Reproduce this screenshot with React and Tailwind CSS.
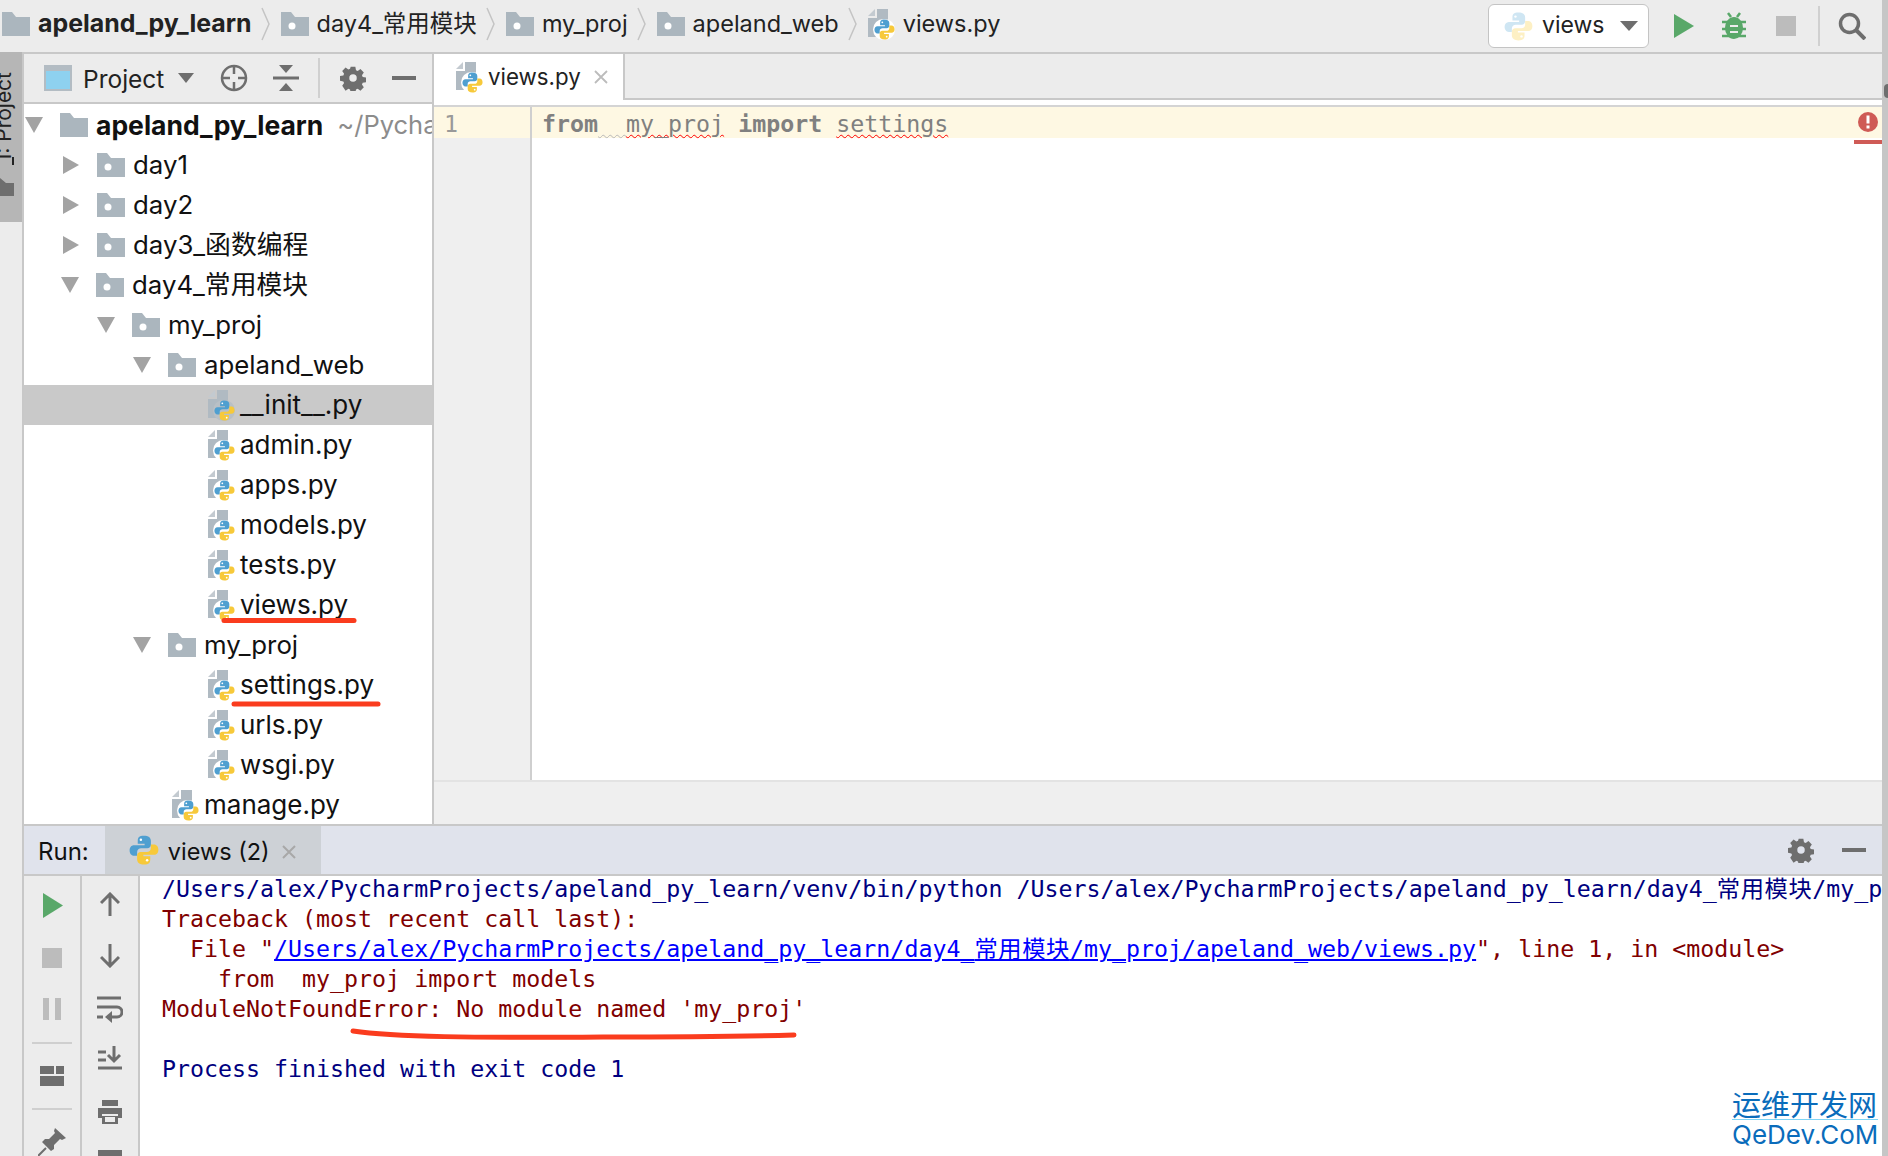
import React from 'react';

const uiFont = { fontFamily: '"Inter", "Noto Sans CJK SC", sans-serif' };

const snake = 'M12 .5C8 .5 7 2 7 4.500V7h5.500v1.200H4C1.800 8.200.5 10 .5 12.300S1.800 16.500 4 16.500h2.500v-3c0-1.800 1.500-3 3.200-3h5c1.500 0 2.800-1.200 2.800-2.800V4.500C17.500 2 15.500.5 12 .5z';

const Python = ({ className, faded }) => (
  <svg viewBox="0 0 24 24" className={className}>
    <path fill={faded ? '#cfe6f3' : '#4f9fd0'} d={snake} />
    <circle cx="9.500" cy="3.800" r="1" fill="#fff" />
    <g transform="rotate(180 12 12)">
      <path fill={faded ? '#fdf0c4' : '#f7c93a'} d={snake} />
      <circle cx="9.500" cy="3.800" r="1" fill="#fff" />
    </g>
  </svg>
);

const PyFile = ({ selected }) => (
  <span className="relative block w-[27px] h-[30px] shrink-0">
    <svg viewBox="0 0 20 28" className="absolute left-0 top-0 w-[20px] h-[28px]">
      <path fill="#b0bac2" d="M9 0h11v28H0V9h9z" />
      <path fill="#c3cad0" d="M7 0v7H0z" />
    </svg>
    <span className={`absolute left-[5px] top-[10px] w-[22px] h-[21px] rounded-full ${selected ? 'bg-[#b9c0c6]' : 'bg-white'}`} />
    <Python className="absolute left-[6px] top-[10px] w-[21px] h-[21px]" />
  </span>
);

const Folder = ({ dot = true }) => (
  <svg viewBox="0 0 28 24" className="w-[28px] h-[24px] shrink-0">
    <path fill="#abb6be" d="M0 0h10l4 5h14v19H0z" />
    {dot && <circle cx="11" cy="14" r="3.500" fill="#fff" />}
  </svg>
);

const Right = () => (
  <svg viewBox="0 0 16 18" className="w-[16px] h-[18px]"><path fill="#a3a3a3" d="M0 0l16 9-16 9z" /></svg>
);
const Down = () => (
  <svg viewBox="0 0 18 16" className="w-[18px] h-[16px]"><path fill="#a3a3a3" d="M0 0h18l-9 16z" /></svg>
);

const Chevron = () => (
  <svg viewBox="0 0 10 34" className="w-[10px] h-[34px] mx-[9.500px] shrink-0">
    <path fill="none" stroke="#c4c4c4" strokeWidth="1.500" d="M1 1l7 16-7 16" />
  </svg>
);

const Gear = ({ className }) => (
  <svg viewBox="0 0 24 24" className={className}>
    <path
      fill="#6e6e6e"
      fillRule="evenodd"
      d="M9.500 0h5l.7 3.600 1.800.8 3-2 3.600 3.600-2 3 .8 1.800 3.600.7v5l-3.600.7-.8 1.800 2 3-3.600 3.600-3-2-1.800.8-.7 3.600h-5l-.7-3.600-1.800-.8-3 2L.4 20.400l2-3-.8-1.800L-2 14.900v-5l3.600-.7.8-1.800-2-3L4 .8l3 2 1.800-.8zM12 8a4 4 0 100 8 4 4 0 000-8z"
      transform="translate(1.700 1.700) scale(.86)"
    />
  </svg>
);

const Minus = ({ className }) => <span className={`block h-[4px] bg-[#6e6e6e] ${className}`} />;

const treeRows = [
  { kind: 'root', name: 'apeland_py_learn', pad: 'pl-[1px]', open: true },
  { kind: 'folder', name: 'day1', pad: 'pl-[38px]' },
  { kind: 'folder', name: 'day2', pad: 'pl-[38px]' },
  { kind: 'folder', name: 'day3_函数编程', pad: 'pl-[38px]' },
  { kind: 'folder', name: 'day4_常用模块', pad: 'pl-[37px]', open: true },
  { kind: 'folder', name: 'my_proj', pad: 'pl-[73px]', open: true },
  { kind: 'folder', name: 'apeland_web', pad: 'pl-[109px]', open: true },
  { kind: 'file', name: '__init__.py', pad: 'pl-[184px]', selected: true },
  { kind: 'file', name: 'admin.py', pad: 'pl-[184px]' },
  { kind: 'file', name: 'apps.py', pad: 'pl-[184px]' },
  { kind: 'file', name: 'models.py', pad: 'pl-[184px]' },
  { kind: 'file', name: 'tests.py', pad: 'pl-[184px]' },
  { kind: 'file', name: 'views.py', pad: 'pl-[184px]' },
  { kind: 'folder', name: 'my_proj', pad: 'pl-[109px]', open: true },
  { kind: 'file', name: 'settings.py', pad: 'pl-[184px]' },
  { kind: 'file', name: 'urls.py', pad: 'pl-[184px]' },
  { kind: 'file', name: 'wsgi.py', pad: 'pl-[184px]' },
  { kind: 'file', name: 'manage.py', pad: 'pl-[148px]' },
];

const TreeRow = ({ row }) => {
  if (row.kind === 'file') {
    return (
      <div className={`h-[40px] flex items-center gap-[5px] ${row.pad} ${row.selected ? 'bg-[#c9c9c9]' : ''}`}>
        <PyFile selected={row.selected} />
        <span className="text-[26px] leading-none text-[#111]">{row.name}</span>
      </div>
    );
  }
  return (
    <div className={`h-[40px] flex items-center overflow-hidden ${row.pad}`}>
      <span className="w-[18px] flex justify-center">{row.open ? <Down /> : <Right />}</span>
      <span className="ml-[17px]"><Folder dot={row.kind !== 'root'} /></span>
      <span className={`ml-[8px] leading-none text-[#111] whitespace-nowrap ${row.kind === 'root' ? 'font-bold text-[26.500px]' : 'text-[25.800px]'}`}>{row.name}</span>
      {row.kind === 'root' && <span className="ml-[14px] text-[25.500px] leading-none text-[#8c8c8c] whitespace-nowrap">~/Pycha</span>}
    </div>
  );
};

const Crumb = ({ name, bold, icon }) => (
  <div className="flex items-center shrink-0">
    {icon || <Folder dot={!bold} />}
    <span className={`ml-[8px] whitespace-nowrap text-[#222] ${bold ? 'font-bold text-[24.900px]' : 'text-[23.500px]'}`}>{name}</span>
  </div>
);

const TopBar = () => (
  <div className="h-[54px] shrink-0 bg-[#ececec] border-b-2 border-[#c8c8c8] flex items-center pl-[2px] pr-[16px]">
    <div className="flex items-center pb-[4px]">
      <Crumb name="apeland_py_learn" bold />
      <Chevron />
      <Crumb name="day4_常用模块" />
      <Chevron />
      <Crumb name="my_proj" />
      <Chevron />
      <Crumb name="apeland_web" />
      <Chevron />
      <Crumb name="views.py" icon={<PyFile />} />
    </div>
    <div className="ml-auto flex items-center">
      <div className="w-[161px] h-[44px] bg-white border border-[#c4c4c4] rounded-[6px] flex items-center pl-[15px]">
        <Python className="w-[29px] h-[29px]" faded />
        <span className="ml-[9px] mb-[1px] text-[23px] text-[#222]">views</span>
        <svg viewBox="0 0 18 10" className="ml-[16px] w-[18px] h-[10px]"><path fill="#6e6e6e" d="M0 0h18l-9 10z" /></svg>
      </div>
      <svg viewBox="0 0 20 24" className="ml-[25px] w-[20px] h-[24px]"><path fill="#59a869" d="M0 0l20 12L0 24z" /></svg>
      <svg viewBox="0 0 24 28" className="ml-[28px] w-[24px] h-[28px]">
        <path stroke="#59a869" strokeWidth="2.500" fill="none" d="M6 1l3 4M18 1l-3 4M0 10h24M0 17h24M0 24h24" />
        <ellipse cx="12" cy="16" rx="9" ry="11" fill="#59a869" />
        <path fill="#ececec" d="M8 13h8v2H8zM8 19h8v2H8z" />
      </svg>
      <span className="ml-[30px] block w-[20px] h-[20px] bg-[#bcbcbc]" />
      <span className="ml-[22px] block w-[2px] h-[40px] bg-[#d0d0d0]" />
      <svg viewBox="0 0 28 28" className="ml-[18px] w-[28px] h-[28px]">
        <circle cx="11.500" cy="11.500" r="9" fill="none" stroke="#6e6e6e" strokeWidth="3.500" />
        <path stroke="#6e6e6e" strokeWidth="4" d="M18 18l9 9" />
      </svg>
    </div>
  </div>
);

const ProjectPanel = () => (
  <div className="w-[410px] shrink-0 flex flex-col border-r-2 border-[#c8c8c8] bg-white overflow-hidden">
    <div className="h-[50px] shrink-0 bg-[#ececec] border-b-2 border-[#c8c8c8] flex items-center pl-[20px]">
      <span className="block w-[28px] h-[26px] border-2 border-t-[6px] border-[#b3bcc3] bg-[#8ed1ef]" />
      <span className="ml-[11px] mt-[3px] text-[24.500px] text-[#222]">Project</span>
      <svg viewBox="0 0 16 10" className="ml-[14px] w-[16px] h-[10px]"><path fill="#6e6e6e" d="M0 0h16l-8 10z" /></svg>
      <svg viewBox="0 0 28 28" className="ml-[26px] w-[28px] h-[28px]">
        <circle cx="14" cy="14" r="12" fill="none" stroke="#6e6e6e" strokeWidth="2.500" />
        <path stroke="#6e6e6e" strokeWidth="2.500" d="M14 2v8M14 18v8M2 14h8M18 14h8" />
      </svg>
      <svg viewBox="0 0 26 26" className="ml-[25px] w-[26px] h-[26px]">
        <path fill="#6e6e6e" d="M6 0h14l-7 8zM0 11.500h26v3H0zM13 18l7 8H6z" />
      </svg>
      <span className="ml-[19px] block w-[2px] h-[40px] bg-[#d0d0d0]" />
      <Gear className="ml-[20px] w-[26px] h-[26px]" />
      <Minus className="ml-[26px] w-[24px]" />
    </div>
    <div className="flex-1 pt-[1px]" style={uiFont}>
      {treeRows.map((row, i) => <TreeRow key={i} row={row} />)}
    </div>
  </div>
);

const Editor = () => (
  <div className="flex-1 min-w-0 flex flex-col bg-white">
    <div className="h-[46px] shrink-0 flex bg-[#ececec] border-b-2 border-[#c8c8c8]">
      <div className="w-[191px] h-[46px] bg-white border-r-2 border-[#c8c8c8] flex items-center pl-[22px]">
        <PyFile />
        <span className="ml-[5px] text-[22.300px] text-[#222]">views.py</span>
        <svg viewBox="0 0 14 14" className="ml-[13px] w-[14px] h-[14px]"><path stroke="#bcbcbc" strokeWidth="1.800" d="M1 1l12 12M13 1L1 13" /></svg>
      </div>
    </div>
    <div className="h-[7px] shrink-0 bg-white border-b-2 border-[#d4d4d4]" />
    <div className="flex-1 flex min-h-0">
      <div className="w-[98px] shrink-0 bg-[#efefef] border-r-2 border-[#cfcfcf]">
        <div className="h-[31px] bg-[#fef8e3] pl-[10px] pt-[3px] flex items-center text-[#999] text-[23.270px] font-['DejaVu_Sans_Mono',monospace]">1</div>
      </div>
      <div className="flex-1 relative">
        <div className="h-[31px] bg-[#fef8e3] pl-[10px] pt-[3px] flex items-center whitespace-pre text-[23.270px] text-[#808080] font-['DejaVu_Sans_Mono',monospace]">
          <span className="font-bold">from</span>
          <span className="underline decoration-wavy decoration-[#b8b8b8] decoration-1 underline-offset-2">{'  '}</span>
          <span className="underline decoration-wavy decoration-[#ff0000] decoration-1 underline-offset-2">my_proj</span>
          <span> </span>
          <span className="font-bold">import</span>
          <span> </span>
          <span className="underline decoration-wavy decoration-[#ff0000] decoration-1 underline-offset-2">settings</span>
        </div>
        <svg viewBox="0 0 20 20" className="absolute right-[4px] top-[5px] w-[20px] h-[20px]">
          <circle cx="10" cy="10" r="10" fill="#cf5b56" />
          <path fill="#fff" d="M8.500 3.500h3v8h-3zM8.500 13.500h3v3h-3z" />
        </svg>
        <span className="absolute right-0 top-[33px] w-[28px] h-[4px] bg-[#cf5b56]" />
      </div>
    </div>
    <div className="h-[44px] shrink-0 bg-[#efefef] border-t-2 border-[#e3e3e3]" />
  </div>
);

const Console = () => (
  <div className="flex-1 min-w-0 bg-white overflow-hidden pl-[22px] text-[23.270px] leading-[30px] whitespace-pre font-['DejaVu_Sans_Mono','Noto_Sans_CJK_SC',monospace]">
    <div className="-mt-[2px] text-[#000080]">/Users/alex/PycharmProjects/apeland_py_learn/venv/bin/python /Users/alex/PycharmProjects/apeland_py_learn/day4_<span className="tracking-[0.6px]">常用模块</span>/my_p</div>
    <div className="text-[#800000]">Traceback (most recent call last):</div>
    <div className="text-[#800000]">
      {'  File "'}
      <span className="text-[#0000ff] underline">/Users/alex/PycharmProjects/apeland_py_learn/day4_<span className="tracking-[0.6px]">常用模块</span>/my_proj/apeland_web/views.py</span>
      {'", line 1, in <module>'}
    </div>
    <div className="text-[#800000]">{'    from  my_proj import models'}</div>
    <div className="text-[#800000]">ModuleNotFoundError: No module named 'my_proj'</div>
    <div className="h-[30px]" />
    <div className="text-[#000080]">Process finished with exit code 1</div>
  </div>
);

const RunPanel = () => (
  <div className="flex-1 min-h-0 flex flex-col">
    <div className="h-[52px] shrink-0 bg-[#e0e3ec] border-y-2 border-[#c8c8c8] flex items-center">
      <span className="ml-[14px] mt-[3px] text-[24px] text-[#111]">Run:</span>
      <div className="ml-[16px] w-[216px] h-full bg-[#cdd1d6] flex items-center pl-[24px]">
        <Python className="w-[30px] h-[30px]" />
        <span className="ml-[9px] mt-[3px] text-[23.500px] text-[#111]">views (2)</span>
        <svg viewBox="0 0 14 14" className="ml-[12px] mt-[3px] w-[14px] h-[14px]"><path stroke="#a8a8a8" strokeWidth="2" d="M1 1l12 12M13 1L1 13" /></svg>
      </div>
      <Gear className="ml-auto w-[26px] h-[26px]" />
      <Minus className="ml-[28px] mr-[16px] w-[24px]" />
    </div>
    <div className="flex-1 min-h-0 flex">
      <div className="w-[58px] shrink-0 bg-[#ececec] border-r-2 border-[#c8c8c8] flex flex-col items-center pt-[17px] overflow-hidden">
        <svg viewBox="0 0 20 25" className="w-[20px] h-[25px] ml-[2px] shrink-0"><path fill="#59a869" d="M0 0l20 12.500L0 25z" /></svg>
        <span className="block mt-[30px] w-[20px] h-[20px] bg-[#bcbcbc] shrink-0" />
        <div className="mt-[30px] flex gap-[6px] shrink-0"><span className="block w-[6px] h-[22px] bg-[#bcbcbc]" /><span className="block w-[6px] h-[22px] bg-[#bcbcbc]" /></div>
        <span className="block mt-[22px] w-[40px] h-[2px] bg-[#cfcfcf] shrink-0" />
        <svg viewBox="0 0 24 20" className="mt-[22px] w-[24px] h-[20px] shrink-0"><path fill="#6e6e6e" d="M0 0h14v8H0zM16 0h8v8h-8zM0 10h24v10H0z" /></svg>
        <span className="block mt-[22px] w-[40px] h-[2px] bg-[#cfcfcf] shrink-0" />
        <svg viewBox="0 0 28 28" className="mt-[18px] w-[28px] h-[28px] shrink-0">
          <path fill="#6e6e6e" d="M17 0l11 10-4 2-2-1-6 6 0 4-3 2-9-9 3-3 4 0 6-6-1-2z" />
          <path stroke="#6e6e6e" strokeWidth="2" d="M8 20L0 28" />
        </svg>
      </div>
      <div className="w-[58px] shrink-0 bg-[#ececec] border-r-2 border-[#c8c8c8] flex flex-col items-center pt-[16px] overflow-hidden">
        <svg viewBox="0 0 20 24" className="w-[20px] h-[24px] shrink-0"><path fill="none" stroke="#6e6e6e" strokeWidth="3" d="M10 24V2M1 11l9-9 9 9" /></svg>
        <svg viewBox="0 0 20 24" className="mt-[28px] w-[20px] h-[24px] shrink-0"><path fill="none" stroke="#6e6e6e" strokeWidth="3" d="M10 0v22M1 13l9 9 9-9" /></svg>
        <svg viewBox="0 0 26 28" className="mt-[28px] w-[26px] h-[28px] shrink-0">
          <path fill="none" stroke="#6e6e6e" strokeWidth="3" d="M0 2h24M0 11h20a4.500 4.500 0 010 10h-9M0 21h6" />
          <path fill="#6e6e6e" d="M15 15l-7 6 7 6z" />
        </svg>
        <svg viewBox="0 0 24 24" className="mt-[22px] w-[24px] h-[24px] shrink-0">
          <path fill="none" stroke="#6e6e6e" strokeWidth="3" d="M0 22h24M0 6h8M0 14h8M16 0v14M10 9l6 6 6-6" />
        </svg>
        <svg viewBox="0 0 24 24" className="mt-[30px] w-[24px] h-[24px] shrink-0">
          <path fill="#6e6e6e" d="M4 0h16v6H4zM0 8h24v10h-4v-4H4v4H0zM4 16h16v8H4z" />
          <path fill="#ececec" d="M7 17h10v5H7z" />
        </svg>
        <span className="block mt-[26px] w-[24px] h-[20px] bg-[#6e6e6e] shrink-0" />
      </div>
      <Console />
    </div>
  </div>
);

const App = () => (
  <div className="relative w-[1888px] h-[1156px] overflow-hidden flex bg-white" style={uiFont}>
    <div className="flex-1 min-w-0 flex flex-col">
      <TopBar />
      <div className="flex-1 min-h-0 flex">
        <div className="w-[22px] shrink-0 bg-[#ececec]">
          <div className="-mt-[2px] h-[170px] bg-[#b6b6b6] overflow-hidden relative">
            <span className="absolute -left-[6px] top-[20px] text-[21px] leading-[20px] text-[#222] whitespace-nowrap rotate-180 [writing-mode:vertical-rl]">1: Project</span>
            <span className="absolute left-[12px] top-[105px] w-[2px] h-[8px] bg-[#222]" />
            <svg viewBox="0 0 14 18" className="absolute left-0 top-[126px] w-[14px] h-[18px]"><path fill="#6e6e6e" d="M0 0l6 5h8v13H0z" /></svg>
          </div>
        </div>
        <div className="flex-1 min-w-0 flex flex-col border-l-2 border-[#c8c8c8]">
          <div className="h-[770px] shrink-0 flex">
            <ProjectPanel />
            <Editor />
          </div>
          <RunPanel />
        </div>
      </div>
    </div>
    <div className="relative w-[6px] shrink-0 bg-[#c6c6c6]">
      <span className="absolute left-[2px] top-[84px] w-[8px] h-[14px] rounded-full bg-[#6e6e6e]" />
    </div>

    <svg viewBox="0 0 1888 1156" className="absolute inset-0 w-[1888px] h-[1156px] pointer-events-none">
      <g fill="none" stroke="#fa3c1e" strokeWidth="5" strokeLinecap="round">
        <path d="M224 620.500h130" />
        <path d="M234 704h144" />
        <path d="M353 1031c40 6 120 7 250 6 70 0 120 0 191-2" />
      </g>
    </svg>

    <div className="absolute right-[10px] top-[1088px] w-[146px] text-[#0a6cbb]">
      <div className="text-[29px] leading-[31px] whitespace-nowrap font-['Noto_Sans_CJK_SC',sans-serif] border-b border-[#7fd4f5]">运维开发网</div>
      <div className="text-[26px] leading-[29px] whitespace-nowrap">QeDev.CoM</div>
    </div>
  </div>
);

export default App;
